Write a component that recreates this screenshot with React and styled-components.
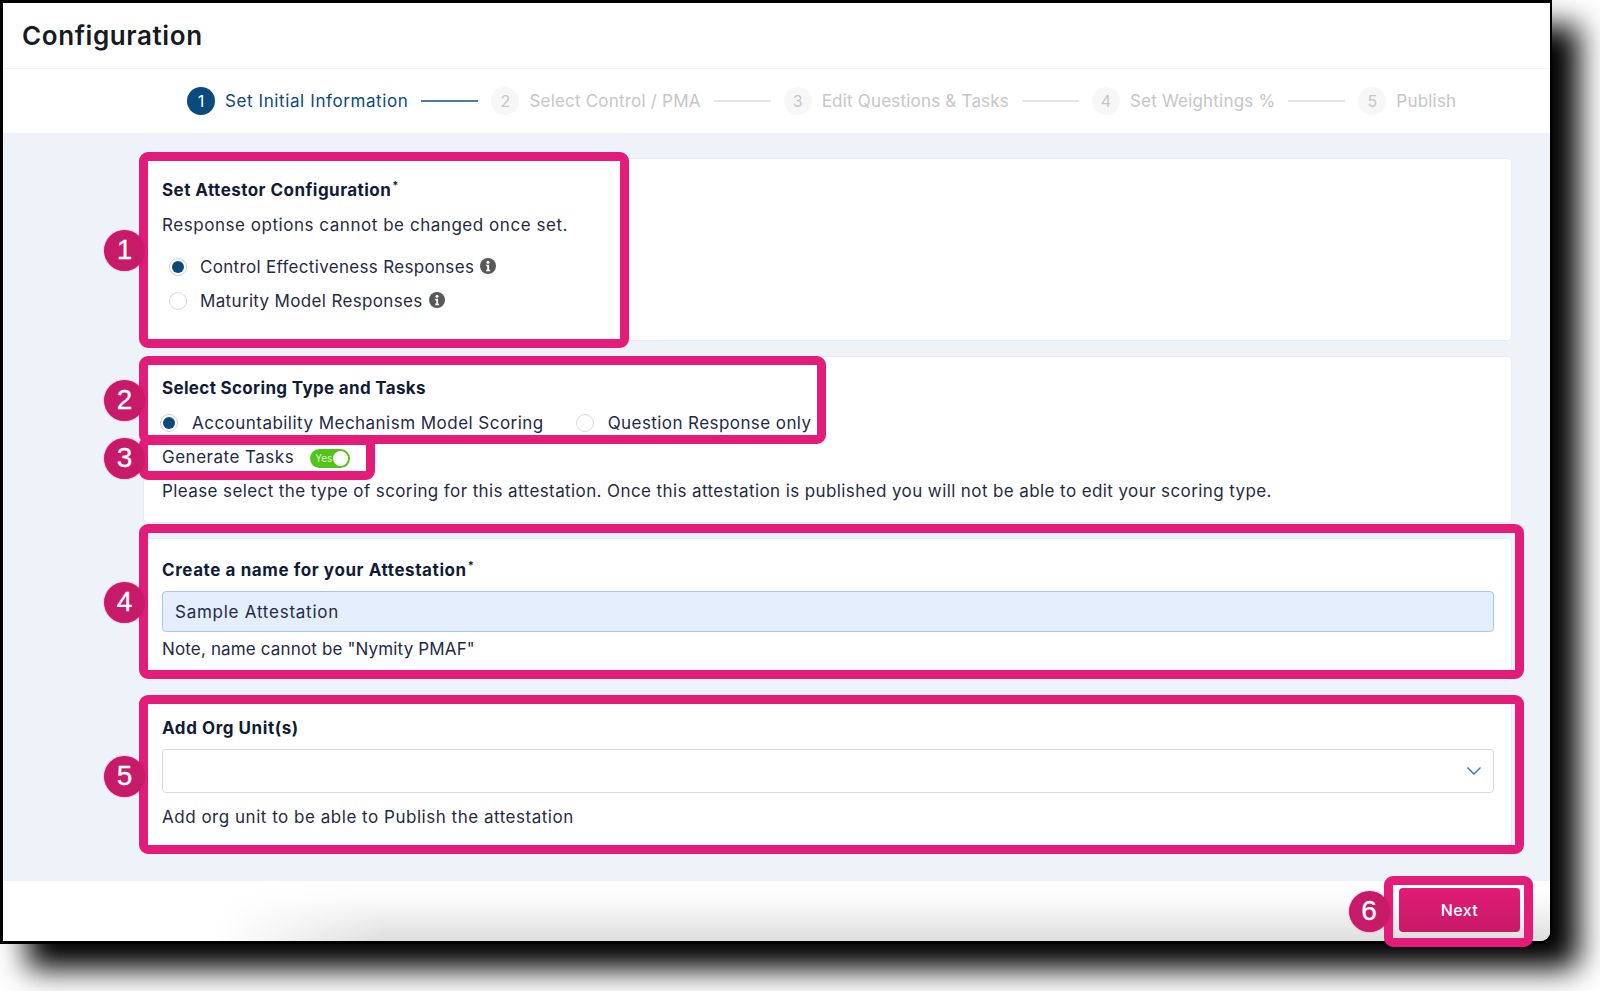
import React from 'react';
import styled, { createGlobalStyle } from 'styled-components';

const GlobalStyle = createGlobalStyle`
  html, body {
    margin: 0;
    padding: 0;
    background: #fff;
    font-family: Inter, "Liberation Sans", sans-serif;
    color: #1f2b45;
  }
  * { box-sizing: border-box; }
`;

const Page = styled.div`
  width: 1600px;
  height: 991px;
  overflow: hidden;
  background: #fff;
`;

const Window = styled.div`
  position: relative;
  width: 1552px;
  height: 944px;
  display: flex;
  flex-direction: column;
  border: 3px solid #000;
  border-right-width: 2px;
  border-bottom-right-radius: 12px;
  background: #fff;
  box-shadow: 27px 25px 30px #000;
`;

const Header = styled.header`
  height: 66px;
  padding-left: 19px;
  display: flex;
  align-items: center;
  border-bottom: 1px solid #f2f2f2;
  font-size: 26px;
  font-weight: 600;
  letter-spacing: 0.6px;
  color: #141a26;
`;

const Stepper = styled.nav`
  height: 64px;
  padding-left: 184px;
  display: flex;
  align-items: center;
  gap: 13px;
`;

const Step = styled.div`
  display: flex;
  align-items: center;
  gap: 10px;
  font-size: 17px;
  letter-spacing: ${p => (p.$active ? '0.6px' : '0.2px')};
  color: ${p => (p.$active ? '#0b4a7d' : '#c6c6c6')};
`;

const StepNumber = styled.span`
  width: 28px;
  height: 28px;
  border-radius: 50%;
  display: flex;
  align-items: center;
  justify-content: center;
  font-size: 16px;
  letter-spacing: 0;
  background: ${p => (p.$active ? '#0b4a7d' : '#f7f7f7')};
  color: ${p => (p.$active ? '#fff' : '#c6c6c6')};
`;

const StepLine = styled.span`
  width: 57px;
  height: 2px;
  background: ${p => (p.$active ? '#4f7ca3' : '#e6e6e6')};
`;

const Main = styled.main`
  flex: 1;
  padding: 26px 39px 0 141px;
  display: flex;
  flex-direction: column;
  gap: 17px;
  background: #eef3fa;
`;

const Card = styled.section`
  display: flex;
  flex-direction: column;
  padding: 19px 17px 19px 18px;
  background: #fff;
  border-radius: 4px;
  box-shadow: 0 0 0 1px #e8edf4;
`;

const AttestorCard = styled(Card)`
  padding-bottom: 27px;
`;

const OrgCard = styled(Card)`
  padding-bottom: 22px;
`;

const Heading = styled.h2`
  margin: 0;
  font-size: 17px;
  line-height: 24px;
  font-weight: 700;
  letter-spacing: ${p => p.$ls}px;
  color: #101c36;
  sup {
    font-size: 11px;
    line-height: 0;
    vertical-align: 7px;
    margin-left: 1px;
  }
`;

const TextLine = styled.div`
  font-size: 17px;
  line-height: 24px;
  letter-spacing: ${p => p.$ls}px;
  margin-top: ${p => p.$top || 0}px;
`;

const OptionRow = styled.label`
  display: flex;
  align-items: center;
  height: 24px;
  font-size: 17px;
  letter-spacing: ${p => p.$ls}px;
  margin-top: ${p => p.$top || 0}px;
`;

const Radio = styled.span`
  flex: none;
  width: 18px;
  height: 18px;
  border-radius: 50%;
  border: 1px solid ${p => (p.$checked ? '#cdd3da' : '#d9d9d9')};
  background: #fff;
  display: flex;
  align-items: center;
  justify-content: center;
  margin-right: ${p => p.$gap}px;
  margin-left: ${p => p.$left || 0}px;
  &::after {
    content: '';
    width: 12px;
    height: 12px;
    border-radius: 50%;
    background: ${p => (p.$checked ? '#0b4a7d' : 'transparent')};
  }
`;

const InfoIcon = styled.svg`
  flex: none;
  width: 16px;
  height: 16px;
  margin-left: 6px;
  margin-top: -3px;
`;

const ScoringRow = styled.div`
  display: flex;
  align-items: center;
  height: 24px;
  margin-top: 11px;
`;

const ToggleRow = styled.div`
  display: flex;
  align-items: center;
  height: 24px;
  margin-top: 10px;
  font-size: 17px;
  letter-spacing: 0.5px;
`;

const Toggle = styled.span`
  margin-left: 16px;
  width: 40px;
  height: 19px;
  margin-top: 2px;
  border-radius: 10px;
  background: #52c41a;
  display: flex;
  align-items: center;
  justify-content: space-between;
  padding: 0 2px 0 5px;
  font-size: 10px;
  letter-spacing: 0;
  color: #dff5d0;
`;

const Knob = styled.span`
  width: 15px;
  height: 15px;
  border-radius: 50%;
  background: #fff;
`;

const NameInput = styled.input`
  display: block;
  width: 100%;
  height: 41px;
  margin-top: 9px;
  padding: 0 12px;
  border: 1px solid #a4c9f1;
  border-radius: 4px;
  background: #e4eefc;
  font-family: inherit;
  font-size: 17px;
  letter-spacing: 0.75px;
  color: #1f2b45;
  outline: none;
`;

const SelectBox = styled.div`
  height: 44px;
  margin-top: 9px;
  padding-right: 11px;
  display: flex;
  align-items: center;
  justify-content: flex-end;
  border: 1px solid #d9d9d9;
  border-radius: 4px;
  background: #fff;
`;

const Footer = styled.footer`
  height: 60px;
  padding: 7px 30px 0 0;
  display: flex;
  justify-content: flex-end;
  align-items: flex-start;
  border-bottom-right-radius: 9px;
  background:
    linear-gradient(to right, #fff 215px, rgba(255, 255, 255, 0) 380px),
    linear-gradient(to bottom, #fff 0%, #fbfbfb 30%, #dedede 100%);
`;

const NextButton = styled.button`
  width: 121px;
  height: 44px;
  border: none;
  border-radius: 4px;
  background: linear-gradient(to bottom, #e01c74, #c81a68);
  color: #fff;
  font-family: inherit;
  font-size: 16px;
  font-weight: 500;
  letter-spacing: 0.4px;
`;

const Highlight = styled.div`
  position: absolute;
  left: ${p => p.$x - 3}px;
  top: ${p => p.$y - 3}px;
  width: ${p => p.$w}px;
  height: ${p => p.$h}px;
  border: 9px solid #e31c79;
  border-radius: 9px;
  pointer-events: none;
`;

const Badge = styled.div`
  position: absolute;
  left: ${p => p.$x - 3 - 20.5}px;
  top: ${p => p.$y - 3 - 20.5}px;
  width: 41px;
  height: 41px;
  border-radius: 50%;
  display: flex;
  align-items: center;
  justify-content: center;
  background: #c71a69;
  box-shadow: 0 0 2px rgba(199, 26, 105, 0.5);
  color: #fff;
  font-family: "Liberation Sans", Arial, sans-serif;
  font-size: 28px;
  -webkit-text-stroke: 0.3px #fff;
`;

const Info = () => (
  <InfoIcon viewBox="0 0 16 16">
    <circle cx="8" cy="8" r="8" fill="#595959" />
    <circle cx="8" cy="4.2" r="1.5" fill="#fff" />
    <path d="M6.2 6.8h2.9v5h1v1.4H6.2v-1.4h1v-3.6h-1z" fill="#fff" />
  </InfoIcon>
);

const steps = [
  { label: 'Select Control / PMA' },
  { label: 'Edit Questions & Tasks' },
  { label: 'Set Weightings %' },
  { label: 'Publish' },
];

const highlights = [
  { x: 139, y: 152, w: 490, h: 196 },
  { x: 139, y: 356, w: 687, h: 88 },
  { x: 139, y: 436, w: 236, h: 44 },
  { x: 139, y: 524, w: 1385, h: 155 },
  { x: 139, y: 695, w: 1385, h: 159 },
  { x: 1384, y: 876, w: 149, h: 71 },
];

const badges = [
  { n: 1, x: 124.5, y: 250 },
  { n: 2, x: 124.5, y: 400 },
  { n: 3, x: 124.5, y: 458 },
  { n: 4, x: 124.5, y: 602 },
  { n: 5, x: 124.5, y: 776 },
  { n: 6, x: 1369, y: 911 },
];

const App = () => {
  return (
    <Page>
      <GlobalStyle />
      <Window>
        <Header>Configuration</Header>
        <Stepper>
          <Step $active>
            <StepNumber $active>1</StepNumber>
            Set Initial Information
          </Step>
          <StepLine $active />
          {steps.map((step, index) => (
            <React.Fragment key={step.label}>
              <Step>
                <StepNumber>{index + 2}</StepNumber>
                {step.label}
              </Step>
              {index < steps.length - 1 && <StepLine />}
            </React.Fragment>
          ))}
        </Stepper>
        <Main>
          <AttestorCard>
            <Heading $ls={0.46}>Set Attestor Configuration<sup>*</sup></Heading>
            <TextLine $top={11} $ls={0.54}>Response options cannot be changed once set.</TextLine>
            <OptionRow $top={18} $ls={0.32}>
              <Radio $checked $left={7} $gap={13} />
              Control Effectiveness Responses
              <Info />
            </OptionRow>
            <OptionRow $top={10} $ls={0.34}>
              <Radio $left={7} $gap={13} />
              Maturity Model Responses
              <Info />
            </OptionRow>
          </AttestorCard>
          <Card>
            <Heading $ls={0.33}>Select Scoring Type and Tasks</Heading>
            <ScoringRow>
              <OptionRow $ls={0.47}>
                <Radio $checked $left={-2} $gap={14} />
                Accountability Mechanism Model Scoring
              </OptionRow>
              <OptionRow $ls={0.42}>
                <Radio $left={32} $gap={14} />
                Question Response only
              </OptionRow>
            </ScoringRow>
            <ToggleRow>
              Generate Tasks
              <Toggle>Yes<Knob /></Toggle>
            </ToggleRow>
            <TextLine $top={10} $ls={0.4}>
              Please select the type of scoring for this attestation. Once this attestation is published you will not be able to edit your scoring type.
            </TextLine>
          </Card>
          <Card>
            <Heading $ls={0.59}>Create a name for your Attestation<sup>*</sup></Heading>
            <NameInput readOnly value="Sample Attestation" />
            <TextLine $top={5} $ls={0.15}>Note, name cannot be "Nymity PMAF"</TextLine>
          </Card>
          <OrgCard>
            <Heading $ls={0.56}>Add Org Unit(s)</Heading>
            <SelectBox>
              <svg width="16" height="10" viewBox="0 0 16 10" fill="none">
                <path d="M1.5 1.5 8 8l6.5-6.5" stroke="#2f6fd8" strokeWidth="1.4" />
              </svg>
            </SelectBox>
            <TextLine $top={12} $ls={0.52}>Add org unit to be able to Publish the attestation</TextLine>
          </OrgCard>
        </Main>
        <Footer>
          <NextButton>Next</NextButton>
        </Footer>
        {highlights.map(h => (
          <Highlight key={`${h.x}-${h.y}`} $x={h.x} $y={h.y} $w={h.w} $h={h.h} />
        ))}
        {badges.map(b => (
          <Badge key={b.n} $x={b.x} $y={b.y}>{b.n}</Badge>
        ))}
      </Window>
    </Page>
  );
};

export default App;
